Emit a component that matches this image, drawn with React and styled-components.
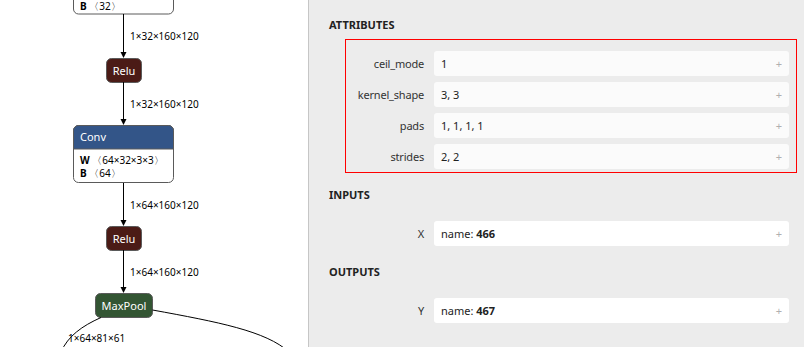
import React from 'react';
import styled, { createGlobalStyle } from 'styled-components';

const GlobalStyle = createGlobalStyle`
  html, body {
    margin: 0;
    padding: 0;
    overflow: hidden;
  }
  body {
    font-family: "Noto Sans", "Open Sans", sans-serif;
  }
`;

const attributes = [
  { name: 'ceil_mode', value: '1' },
  { name: 'kernel_shape', value: '3, 3' },
  { name: 'pads', value: '1, 1, 1, 1' },
  { name: 'strides', value: '2, 2' },
];

const Layout = styled.div`
  display: flex;
  width: 804px;
  height: 347px;
  overflow: hidden;
`;

const GraphPane = styled.div`
  width: 308px;
  flex: none;
  background: #ffffff;
  border-right: 1px solid #c6c6c6;
  overflow: hidden;

  svg {
    display: block;
  }
`;

const Sidebar = styled.aside`
  flex: 1;
  background: #ececec;
  padding: 17px 7px 0 20px;
  display: flex;
  flex-direction: column;
`;

const SectionTitle = styled.div`
  font-size: 11px;
  font-weight: 700;
  line-height: 16px;
  color: #222;
  margin-top: ${(p) => p.$top || 0}px;
`;

const ItemList = styled.div`
  display: flex;
  flex-direction: column;
  gap: 6px;
  margin-left: 16px;
  border: 1px solid ${(p) => (p.$highlight ? '#ff0000' : 'transparent')};
  margin-top: 6px;
  padding: 11px 7px 3px 0;
`;

const Row = styled.div`
  display: grid;
  grid-template-columns: 78px 1fr;
  column-gap: 10px;
  align-items: center;
`;

const Label = styled.div`
  text-align: right;
  font-size: 11px;
  letter-spacing: -0.2px;
  color: #333;
`;

const Value = styled.div`
  height: 25px;
  display: flex;
  align-items: center;
  justify-content: space-between;
  padding: 0 7px;
  background: ${(p) => (p.$plain ? '#ffffff' : '#fbfbfb')};
  border-radius: 3px;
  font-size: 11px;
  color: #222;

  b {
    font-weight: 700;
  }
`;

const Expand = styled.span`
  color: #b0b0b0;
  font-size: 11px;
  line-height: 1;
`;

const GraphText = styled.text`
  font-family: "Noto Sans", "Open Sans", sans-serif;
  font-size: ${(p) => p.$size || 10}px;
  fill: ${(p) => p.$fill || '#000'};
`;

const Op = ({ x, y, w, label, color }) => (
  <g>
    <rect x={x} y={y} width={w} height={24} rx={5} fill={color} stroke="#5a5a5a" />
    <GraphText x={x + w / 2} y={y + 16} textAnchor="middle" $size={11} $fill="#fff">
      {label}
    </GraphText>
  </g>
);

const Edge = ({ y1, y2, label }) => (
  <g>
    <line x1={123.5} y1={y1} x2={123.5} y2={y2 - 4} stroke="#000" />
    <path d={`M 120.5 ${y2 - 6} L 123.5 ${y2} L 126.5 ${y2 - 6} Z`} fill="#000" />
    <GraphText x={130} y={(y1 + y2) / 2 + 4}>
      {label}
    </GraphText>
  </g>
);

const Graph = () => (
  <svg width="308" height="347" viewBox="0 0 308 347">
    <rect x={73.5} y={-40} width={100} height={54} rx={5} fill="#fff" stroke="#5a5a5a" />
    <GraphText x={80} y={10}>
      <tspan fontWeight="700">B</tspan> 〈32〉
    </GraphText>

    <Edge y1={14} y2={58} label="1×32×160×120" />
    <Op x={106.5} y={58.5} w={35} label="Relu" color="#4b1b16" />
    <Edge y1={82} y2={125} label="1×32×160×120" />

    <g>
      <rect x={73.5} y={125.5} width={100} height={57} rx={5} fill="#fff" stroke="#5a5a5a" />
      <path d="M 73.5 149 L 73.5 130.5 A 5 5 0 0 1 78.5 125.5 L 168.5 125.5 A 5 5 0 0 1 173.5 130.5 L 173.5 149 Z" fill="#335588" stroke="#5a5a5a" />
      <GraphText x={80} y={141} $size={11} $fill="#fff">Conv</GraphText>
      <GraphText x={80} y={164}>
        <tspan fontWeight="700">W</tspan> 〈64×32×3×3〉
      </GraphText>
      <GraphText x={80} y={177}>
        <tspan fontWeight="700">B</tspan> 〈64〉
      </GraphText>
    </g>

    <Edge y1={183} y2={226} label="1×64×160×120" />
    <Op x={106.5} y={226.5} w={35} label="Relu" color="#4b1b16" />
    <Edge y1={250} y2={293} label="1×64×160×120" />
    <Op x={95.5} y={293.5} w={57} label="MaxPool" color="#335533" />

    <path d="M 101 317.5 C 82 326, 68 336, 61 352" fill="none" stroke="#000" />
    <path d="M 152.5 310 C 218 322, 266 331, 289 352" fill="none" stroke="#000" />
    <GraphText x={68} y={342}>1×64×81×61</GraphText>
  </svg>
);

const App = () => (
  <Layout>
    <GlobalStyle />
    <GraphPane>
      <Graph />
    </GraphPane>
    <Sidebar>
      <SectionTitle>ATTRIBUTES</SectionTitle>
      <ItemList $highlight>
        {attributes.map((a) => (
          <Row key={a.name}>
            <Label>{a.name}</Label>
            <Value>
              <span>{a.value}</span>
              <Expand>+</Expand>
            </Value>
          </Row>
        ))}
      </ItemList>

      <SectionTitle $top={14}>INPUTS</SectionTitle>
      <ItemList>
        <Row>
          <Label>X</Label>
          <Value $plain>
            <span>
              name: <b>466</b>
            </span>
            <Expand>+</Expand>
          </Value>
        </Row>
      </ItemList>

      <SectionTitle $top={14}>OUTPUTS</SectionTitle>
      <ItemList>
        <Row>
          <Label>Y</Label>
          <Value $plain>
            <span>
              name: <b>467</b>
            </span>
            <Expand>+</Expand>
          </Value>
        </Row>
      </ItemList>
    </Sidebar>
  </Layout>
);

export default App;
